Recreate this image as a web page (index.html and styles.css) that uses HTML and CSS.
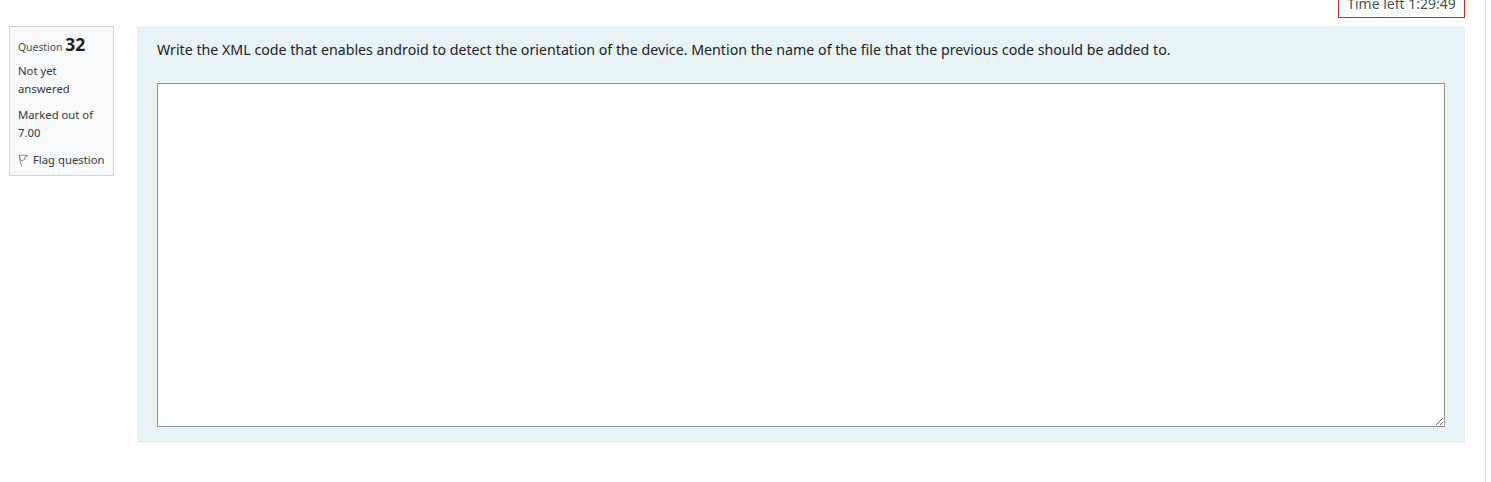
FILE: index.html
```html
<!DOCTYPE html>
<html lang="en">
<head>
<meta charset="utf-8">
<title>Question 32</title>
<link rel="stylesheet" href="styles.css">
</head>
<body>
<div class="page">
  <div class="timer-row">
    <div class="timer">Time left 1:29:49</div>
  </div>
  <div class="question">
    <aside class="info">
      <h3 class="qno">Question <span class="qnum">32</span></h3>
      <div class="state">Not yet answered</div>
      <div class="grade">Marked out of 7.00</div>
      <div class="flag">
        <svg class="flag-icon" width="11" height="13" viewBox="0 0 11 13" aria-hidden="true">
          <path d="M1 1 L10 1.5 L6.5 3.5 L7 5.5 L3 7 M1 1 L3.5 12.5 M1 1 L3 7" fill="none" stroke="#8a8f93" stroke-width="1"/>
        </svg>
        <span>Flag question</span>
      </div>
    </aside>
    <main class="content">
      <p class="qtext">Write the XML code that enables android to detect the orientation of the device. Mention the name of the file that the previous code should be added to.</p>
      <textarea class="answer"></textarea>
    </main>
  </div>
</div>
</body>
</html>
```
FILE: styles.css
```css
* { box-sizing: border-box; }
html, body { margin: 0; height: 482px; overflow: hidden; background: #fff; }
body { font-family: "Noto Sans", "Open Sans", sans-serif; color: #1d2125; }
.page { width: 1486px; height: 482px; border-right: 1px solid #dcdcdc; }
.timer-row { display: flex; justify-content: flex-end; padding-right: 20px; height: 26px; }
.timer {
  width: 127px; height: 28px; margin-top: -10px;
  border: 1px solid #d2281a; color: #495057;
  font-size: 14px; line-height: 25px; text-align: center;
}
.question { display: flex; align-items: flex-start; padding-left: 9px; gap: 23px; }
.info {
  width: 105px; height: 150px; flex: none;
  padding: 5px 7px 6px 8px; background: #f8f9fa; border: 1px solid #ced4da;
  font-size: 11.3px; line-height: 18px;
}
.qno { margin: 0 0 6px; font-size: 10.4px; font-weight: 400; line-height: 24px; height: 24px; color: #495057; white-space: nowrap; }
.qnum { font-size: 17.5px; font-weight: 700; color: #1d2125; }
.state { margin-bottom: 8px; color: #343a40; }
.grade { margin-bottom: 9px; color: #343a40; }
.flag { display: flex; align-items: center; gap: 4px; white-space: nowrap; color: #343a40; }
.flag-icon { flex: none; }
.content {
  width: 1328px; height: 417px; flex: none;
  padding: 14px 20px 16px; background: #e7f3f5;
}
.qtext { margin: 0 0 23px; font-size: 14.21px; line-height: 20px; color: #1d2125; white-space: nowrap; }
.answer {
  display: block; width: 1288px; height: 344px; margin: 0; padding: 4px;
  border: 1px solid #8f959e; background: #fff; border-radius: 0; outline: none;
}
```
